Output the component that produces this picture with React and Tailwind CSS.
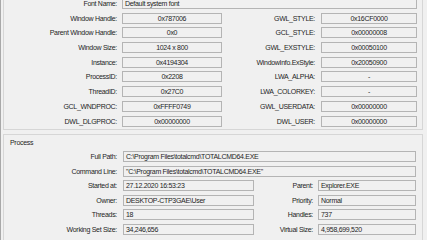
import React from "react";

const font = { fontFamily: "'Liberation Sans', Arial, sans-serif" };

function Box({ w, children, left }) {
  return (
    <div
      className={`h-[11px] border border-[#b4b4b4] bg-[#f0f0f0] flex items-center overflow-hidden whitespace-nowrap ${left ? "justify-start pl-[2px]" : "justify-center"}`}
      style={{ width: w }}
    >
      {children}
    </div>
  );
}

const top = [
  ["Window Handle:", "0x787006", "GWL_STYLE:", "0x16CF0000"],
  ["Parent Window Handle:", "0x0", "GCL_STYLE:", "0x00000008"],
  ["Window Size:", "1024 x 800", "GWL_EXSTYLE:", "0x00050100"],
  ["Instance:", "0x4194304", "WindowInfo.ExStyle:", "0x20050900"],
  ["ProcessID:", "0x2208", "LWA_ALPHA:", "-"],
  ["ThreadID:", "0x27C0", "LWA_COLORKEY:", "-"],
  ["GCL_WNDPROC:", "0xFFFF0749", "GWL_USERDATA:", "0x00000000"],
  ["DWL_DLGPROC:", "0x00000000", "DWL_USER:", "0x00000000"],
];

const proc = [
  ["Started at:", "27.12.2020 16:53:23", "Parent:", "Explorer.EXE"],
  ["Owner:", "DESKTOP-CTP3GAE\\User", "Priority:", "Normal"],
  ["Threads:", "18", "Handles:", "737"],
  ["Working Set Size:", "34,246,656", "Virtual Size:", "4,958,699,520"],
];

export default function App() {
  return (
    <div
      className="w-[427px] h-[240px] overflow-hidden bg-[#f0f0f0] text-[#1e1e1e] text-[7px] tracking-[-0.3px] leading-[9px] border-l border-[#a8a8a8]"
      style={font}
    >
      <div className="ml-[2px] w-[420px] mt-[-6px] border border-[#d6d6d6] pt-[3px] pb-[2px] flex flex-col gap-[3.7px]">
        <div className="flex items-center h-[11px]">
          <div className="w-[113px] text-right">Font Name:</div>
          <div className="ml-[5px]">
            <Box w={295} left>Default system font</Box>
          </div>
        </div>
        {top.map((r) => (
          <div key={r[0]} className="flex items-center h-[11px]">
            <div className="w-[113px] text-right whitespace-nowrap">{r[0]}</div>
            <div className="ml-[5px]">
              <Box w={100}>{r[1]}</Box>
            </div>
            <div className="w-[93px] text-right whitespace-nowrap">{r[2]}</div>
            <div className="ml-[6px]">
              <Box w={96}>{r[3]}</Box>
            </div>
          </div>
        ))}
      </div>

      <div className="ml-[2px] w-[420px] mt-[4px] border border-[#d6d6d6] pb-[10px]">
        <div className="mt-[3px] h-[9px] pl-[6px]">Process</div>
        <div className="mt-[4.7px] flex flex-col gap-[3.5px]">
          <div className="flex items-center h-[11px]">
            <div className="w-[113px] text-right">Full Path:</div>
            <div className="ml-[6px]">
              <Box w={293} left>C:\Program Files\totalcmd\TOTALCMD64.EXE</Box>
            </div>
          </div>
          <div className="flex items-center h-[11px]">
            <div className="w-[113px] text-right">Command Line:</div>
            <div className="ml-[6px]">
              <Box w={293} left>"C:\Program Files\totalcmd\TOTALCMD64.EXE"</Box>
            </div>
          </div>
          {proc.map((r) => (
            <div key={r[0]} className="flex items-center h-[11px]">
              <div className="w-[113px] text-right whitespace-nowrap">{r[0]}</div>
              <div className="ml-[6px]">
                <Box w={131} left>{r[1]}</Box>
              </div>
              <div className="w-[59px] text-right whitespace-nowrap">{r[2]}</div>
              <div className="ml-[5px]">
                <Box w={98} left>{r[3]}</Box>
              </div>
            </div>
          ))}
        </div>
      </div>
    </div>
  );
}
